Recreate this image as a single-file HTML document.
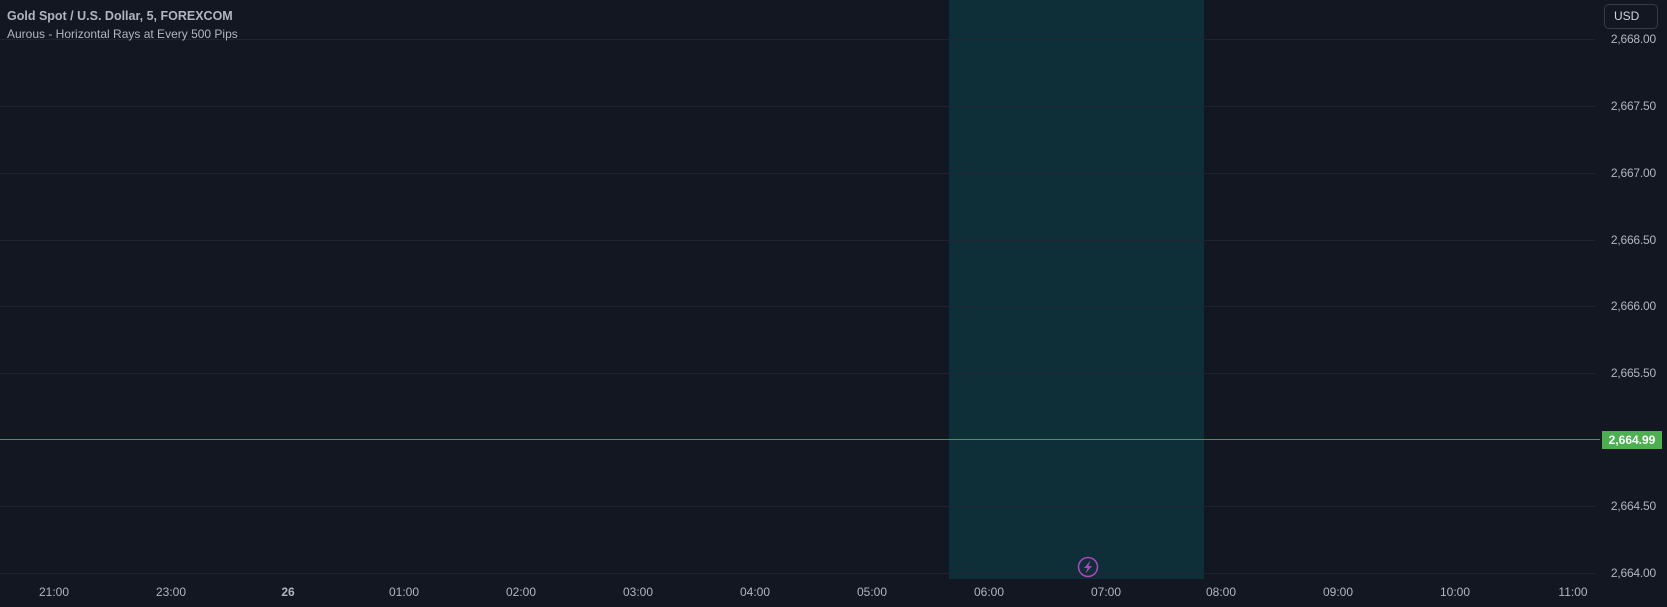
<!DOCTYPE html>
<html><head><style>
body{margin:0;width:1667px;height:607px;background:#131722;overflow:hidden;position:relative;font-family:"Liberation Sans",sans-serif;}
.g{position:absolute;left:0;width:1595px;height:1px;background:#1f2431;}
.band{position:absolute;left:949px;top:0;width:255px;height:579px;background:#0f2f38;}
.pl{position:absolute;right:11px;font-size:12px;color:#b2b5be;transform:translateY(-50%);letter-spacing:-0.2px}
.t{position:absolute;top:585px;font-size:12px;color:#b2b5be;transform:translateX(-50%);}
</style></head><body>
<div class="band"></div>
<div class="g" style="top:39px"></div>
<div class="g" style="top:106px"></div>
<div class="g" style="top:173px"></div>
<div class="g" style="top:240px"></div>
<div class="g" style="top:306px"></div>
<div class="g" style="top:373px"></div>
<div class="g" style="top:506px"></div>
<div class="g" style="top:573px"></div>
<div style="position:absolute;left:0;top:439px;width:1600px;height:1px;background:#3d9a55"></div>
<div style="position:absolute;left:7px;top:9px;font-size:12.5px;font-weight:bold;color:#b2b5be">Gold Spot / U.S. Dollar, 5, FOREXCOM</div>
<div style="position:absolute;left:7px;top:27px;font-size:12px;color:#b2b5be">Aurous - Horizontal Rays at Every 500 Pips</div>
<div style="position:absolute;left:1604px;top:4px;width:54px;height:25px;border:1px solid #363a45;border-radius:5px;box-sizing:border-box;color:#d1d4dc;font-size:12px;line-height:23px;padding-left:9px">USD</div>
<div class="pl" style="top:39px">2,668.00</div>
<div class="pl" style="top:106px">2,667.50</div>
<div class="pl" style="top:173px">2,667.00</div>
<div class="pl" style="top:240px">2,666.50</div>
<div class="pl" style="top:306px">2,666.00</div>
<div class="pl" style="top:373px">2,665.50</div>
<div class="pl" style="top:506px">2,664.50</div>
<div class="pl" style="top:573px">2,664.00</div>
<div style="position:absolute;left:1602px;top:431px;width:60px;height:18px;background:#4caf50;color:#fff;font-size:12px;font-weight:bold;line-height:18px;text-align:center">2,664.99</div>
<svg style="position:absolute;left:1077px;top:556px" width="22" height="22" viewBox="0 0 22 22"><circle cx="11" cy="11" r="9.5" fill="none" stroke="#ab47bc" stroke-width="1.5"/><path d="M13.5 4.5 L7 12 H10.5 L8.5 17.5 L15 10 H11.5 Z" fill="#ab47bc"/></svg>
<div class="t" style="left:54px">21:00</div>
<div class="t" style="left:171px">23:00</div>
<div class="t" style="left:288px;font-weight:bold">26</div>
<div class="t" style="left:404px">01:00</div>
<div class="t" style="left:521px">02:00</div>
<div class="t" style="left:638px">03:00</div>
<div class="t" style="left:755px">04:00</div>
<div class="t" style="left:872px">05:00</div>
<div class="t" style="left:989px">06:00</div>
<div class="t" style="left:1106px">07:00</div>
<div class="t" style="left:1221px">08:00</div>
<div class="t" style="left:1338px">09:00</div>
<div class="t" style="left:1455px">10:00</div>
<div class="t" style="left:1573px">11:00</div>
</body></html>
